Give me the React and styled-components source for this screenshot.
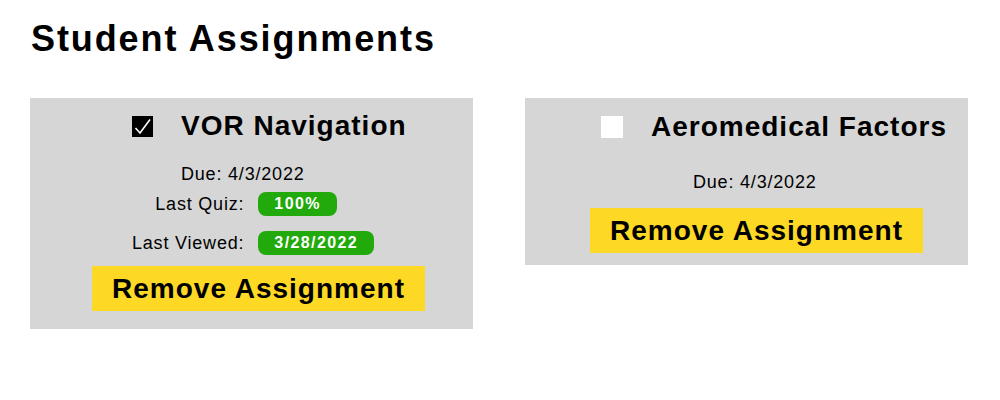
import React from "react";
import styled, { createGlobalStyle } from "styled-components";

const GlobalStyle = createGlobalStyle`
  body {
    margin: 0;
    background: #fff;
    font-family: 'Liberation Sans', Arial, sans-serif;
    color: #000;
  }
`;

const Page = styled.main`
  padding: 19px 30px 0;
`;

const Heading = styled.h1`
  margin: 0 0 39px 1px;
  font-size: 36px;
  line-height: 40px;
  font-weight: 700;
  letter-spacing: 1.9px;
`;

const CardRow = styled.div`
  display: flex;
  align-items: flex-start;
  gap: 52px;
`;

const Card = styled.section`
  width: 443px;
  display: flex;
  flex-direction: column;
  align-items: flex-start;
  background: #d6d6d6;
  padding: ${(p) => p.$pad};
  box-sizing: border-box;
`;

const Header = styled.div`
  display: flex;
  align-items: center;
  gap: 28px;
  height: 22px;
  margin-left: ${(p) => p.$indent}px;
`;

const Box = styled.span`
  display: flex;
  align-items: center;
  justify-content: center;
  width: ${(p) => (p.$checked ? 21 : 22)}px;
  height: ${(p) => (p.$checked ? 21 : 22)}px;
  background: ${(p) => (p.$checked ? "#000" : "#fff")};
`;

const CourseName = styled.h2`
  margin: 0;
  font-size: 28px;
  line-height: 22px;
  font-weight: 700;
  letter-spacing: 1px;
  white-space: nowrap;
`;

const Due = styled.p`
  margin: ${(p) => p.$top}px 0 0 ${(p) => p.$indent}px;
  font-size: 18px;
  line-height: 22px;
  letter-spacing: 0.8px;
`;

const Stats = styled.div`
  display: grid;
  grid-template-columns: auto auto;
  column-gap: 14px;
  row-gap: 15px;
  align-items: center;
  margin: 7px 0 0 ${(p) => p.$indent}px;
`;

const Label = styled.span`
  justify-self: end;
  font-size: 18px;
  line-height: 22px;
  letter-spacing: 0.8px;
`;

const Pill = styled.span`
  justify-self: start;
  height: 24px;
  padding: 0 16px;
  border-radius: 8px;
  background: #22a90b;
  color: #fff;
  font-size: 16px;
  font-weight: 700;
  line-height: 24px;
  letter-spacing: 1.4px;
`;

const RemoveButton = styled.button`
  width: 333px;
  height: 45px;
  margin: ${(p) => p.$top}px 0 0 ${(p) => p.$indent}px;
  padding: 0;
  border: none;
  background: #fdd824;
  color: #000;
  font-family: inherit;
  font-size: 28px;
  font-weight: 700;
  letter-spacing: 1px;
  cursor: pointer;
`;

const Check = () => (
  <svg width="21" height="21" viewBox="0 0 21 21">
    <path d="M3.5 12 L8 17 L18 3.5" fill="none" stroke="#fff" strokeWidth="1.6" />
  </svg>
);

const assignments = [
  {
    id: 1,
    name: "VOR Navigation",
    done: true,
    due: "4/3/2022",
    quiz: "100%",
    viewed: "3/28/2022",
    pad: "17px 0 18px",
    headerIndent: 102,
    dueTop: 26,
    dueIndent: 151,
    statsIndent: 102,
    buttonTop: 11,
    buttonIndent: 62,
  },
  {
    id: 2,
    name: "Aeromedical Factors",
    done: false,
    due: "4/3/2022",
    pad: "18px 0 12px",
    headerIndent: 76,
    dueTop: 33,
    dueIndent: 168,
    buttonTop: 15,
    buttonIndent: 65,
  },
];

const AssignmentCard = ({ a }) => (
  <Card $pad={a.pad}>
    <Header $indent={a.headerIndent}>
      <Box $checked={a.done}>{a.done && <Check />}</Box>
      <CourseName>{a.name}</CourseName>
    </Header>
    <Due $top={a.dueTop} $indent={a.dueIndent}>Due: {a.due}</Due>
    {a.quiz && (
      <Stats $indent={a.statsIndent}>
        <Label>Last Quiz:</Label>
        <Pill>{a.quiz}</Pill>
        <Label>Last Viewed:</Label>
        <Pill>{a.viewed}</Pill>
      </Stats>
    )}
    <RemoveButton $top={a.buttonTop} $indent={a.buttonIndent}>
      Remove Assignment
    </RemoveButton>
  </Card>
);

export default function App() {
  return (
    <Page>
      <GlobalStyle />
      <Heading>Student Assignments</Heading>
      <CardRow>
        {assignments.map((a) => (
          <AssignmentCard key={a.id} a={a} />
        ))}
      </CardRow>
    </Page>
  );
}
